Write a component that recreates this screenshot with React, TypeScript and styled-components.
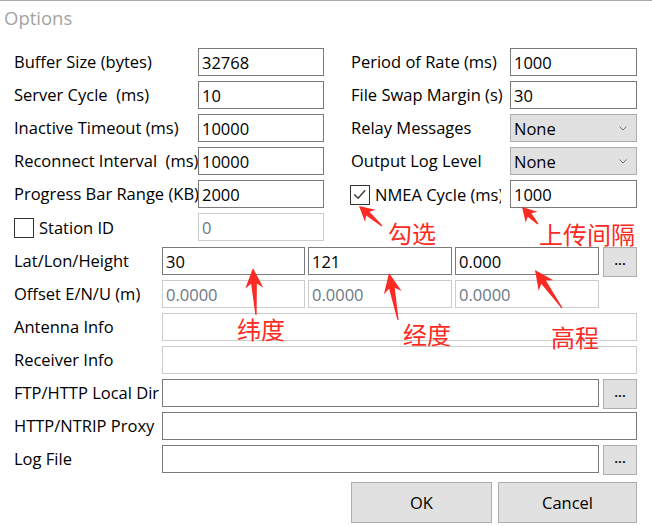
import React from "react";
import styled, { createGlobalStyle } from "styled-components";

const GlobalStyle = createGlobalStyle`
  html, body {
    margin: 0;
    padding: 0;
    background: #ffffff;
  }
  body {
    font-family: "Open Sans", "Noto Sans", "Noto Sans CJK SC", sans-serif;
    color: #000;
  }
`;

const FONT = `"Open Sans", "Noto Sans", "Noto Sans CJK SC", sans-serif`;
const RED = "#fb2a22";

type Pt = [number, number];

const arrowPoints = (tip: Pt, tail: Pt, len: number, half: number) => {
  const dx = tail[0] - tip[0];
  const dy = tail[1] - tip[1];
  const d = Math.hypot(dx, dy);
  const ux = dx / d;
  const uy = dy / d;
  const nx = -uy;
  const ny = ux;
  const at = (a: number, b: number): Pt => [
    tip[0] + ux * a + nx * b,
    tip[1] + uy * a + ny * b,
  ];
  const shaft = half * 0.32;
  const pts: Pt[] = [
    tip,
    at(len, half),
    at(len * 0.78, shaft),
    at(d, 0.6),
    at(d, -0.6),
    at(len * 0.78, -shaft),
    at(len, -half),
  ];
  return pts.map((p) => p.join(",")).join(" ");
};

const ARROWS: { tip: Pt; tail: Pt; len: number; half: number }[] = [
  { tip: [359, 206], tail: [382, 226], len: 15, half: 8 },
  { tip: [522, 207], tail: [538, 224], len: 14, half: 8 },
  { tip: [253, 268], tail: [256, 315], len: 20, half: 9 },
  { tip: [389, 273], tail: [398, 320], len: 20, half: 9 },
  { tip: [535, 270], tail: [562, 308], len: 19, half: 9 },
];

const NOTES = [
  { text: "勾选", x: 388, y: 218 },
  { text: "上传间隔", x: 539, y: 219 },
  { text: "纬度", x: 237, y: 314 },
  { text: "经度", x: 403, y: 319 },
  { text: "高程", x: 551, y: 322 },
];

export default function App() {
  return (
    <>
      <GlobalStyle />
      <Dialog>
        <TopEdge />
        <Title>Options</Title>
        <TopSection>
          <FieldGrid $labelWidth={184} $inputWidth={126}>
            <Label>Buffer Size (bytes)</Label>
            <TextBox>32768</TextBox>
            <Label>Server Cycle  (ms)</Label>
            <TextBox>10</TextBox>
            <Label>Inactive Timeout (ms)</Label>
            <TextBox>10000</TextBox>
            <Label>Reconnect Interval  (ms)</Label>
            <TextBox>10000</TextBox>
            <Label>Progress Bar Range (KB)</Label>
            <TextBox>2000</TextBox>
            <CheckField>
              <CheckBox />
              <span>Station ID</span>
            </CheckField>
            <TextBox $disabled>0</TextBox>
          </FieldGrid>
          <FieldGrid $labelWidth={159} $inputWidth={127}>
            <Label>Period of Rate (ms)</Label>
            <TextBox>1000</TextBox>
            <Label>File Swap Margin (s)</Label>
            <TextBox>30</TextBox>
            <Label>Relay Messages</Label>
            <Combo>
              None
              <Chevron />
            </Combo>
            <Label>Output Log Level</Label>
            <Combo>
              None
              <Chevron />
            </Combo>
            <CheckField $shift={-1} $width={151}>
              <CheckBox>
                <svg width="19" height="19" viewBox="0 0 19 19">
                  <polyline
                    points="3.5,9.5 7.5,13.5 15,5"
                    fill="none"
                    stroke="#3a3a3a"
                    strokeWidth="1.5"
                  />
                </svg>
              </CheckBox>
              <span>NMEA Cycle (ms)</span>
            </CheckField>
            <TextBox>1000</TextBox>
          </FieldGrid>
        </TopSection>

        <BottomGrid>
          <Label>Lat/Lon/Height</Label>
          <TextBox>30</TextBox>
          <TextBox>121</TextBox>
          <TextBox>0.000</TextBox>
          <DotsButton>...</DotsButton>

          <Label>Offset E/N/U (m)</Label>
          <TextBox $disabled>0.0000</TextBox>
          <TextBox $disabled>0.0000</TextBox>
          <TextBox $disabled>0.0000</TextBox>
          <span />

          <Label>Antenna Info</Label>
          <TextBox $disabled $span={4} />

          <Label>Receiver Info</Label>
          <TextBox $disabled $span={4} />

          <Label>FTP/HTTP Local Dir</Label>
          <TextBox $span={3} />
          <DotsButton>...</DotsButton>

          <Label>HTTP/NTRIP Proxy</Label>
          <TextBox $span={4} />

          <Label>Log File</Label>
          <TextBox $span={3} />
          <DotsButton>...</DotsButton>
        </BottomGrid>

        <ButtonRow>
          <DialogButton $width={141}>OK</DialogButton>
          <DialogButton $width={139}>Cancel</DialogButton>
        </ButtonRow>

        <Overlay width="652" height="526" viewBox="0 0 652 526">
          {ARROWS.map((a, i) => (
            <polygon
              key={i}
              points={arrowPoints(a.tip, a.tail, a.len, a.half)}
              fill={RED}
            />
          ))}
        </Overlay>
        {NOTES.map((n) => (
          <Note key={n.text} style={{ left: n.x, top: n.y }}>
            {n.text}
          </Note>
        ))}
      </Dialog>
    </>
  );
}

const Dialog = styled.div`
  position: relative;
  width: 652px;
  height: 526px;
  box-sizing: border-box;
  padding: 0 15px 0 14px;
  overflow: hidden;
  font-family: ${FONT};
  font-size: 16.5px;
`;

const TopEdge = styled.div`
  height: 1px;
  margin: 0 -15px 0 -14px;
  background: #a6a6a6;
`;

const Title = styled.div`
  height: 47px;
  margin-left: -10px;
  padding-top: 4px;
  box-sizing: border-box;
  font-size: 18.5px;
  color: #a3a3a3;
  line-height: 26px;
`;

const TopSection = styled.div`
  display: flex;
  gap: 27px;
`;

const FieldGrid = styled.div<{ $labelWidth: number; $inputWidth: number }>`
  display: grid;
  grid-template-columns: ${(p) => p.$labelWidth}px ${(p) => p.$inputWidth}px;
  grid-auto-rows: 28px;
  row-gap: 5px;
`;

const Label = styled.div`
  display: flex;
  align-items: center;
  white-space: pre;
  overflow: hidden;
  line-height: 1;
  padding-top: 1px;
`;

const TextBox = styled.div<{ $disabled?: boolean; $span?: number }>`
  box-sizing: border-box;
  height: 28px;
  display: flex;
  align-items: center;
  padding: 1px 3px 0;
  border: 1px solid ${(p) => (p.$disabled ? "#cccccc" : "#7a7a7a")};
  background: #fff;
  color: ${(p) => (p.$disabled ? "#6d7886" : "#000")};
  white-space: nowrap;
  overflow: hidden;
  grid-column: span ${(p) => p.$span ?? 1};
  margin-right: ${(p) => (p.$span === 4 ? "-1px" : "0")};
`;

const Combo = styled.div`
  box-sizing: border-box;
  height: 28px;
  display: flex;
  align-items: center;
  justify-content: space-between;
  padding: 1px 9px 0 3px;
  border: 1px solid #adadad;
  background: #e1e1e1;
`;

const Chevron = () => (
  <svg width="8" height="5" viewBox="0 0 8 5">
    <polyline points="0.5,0.5 4,4 7.5,0.5" fill="none" stroke="#707070" strokeWidth="1" />
  </svg>
);

const CheckField = styled.div<{ $shift?: number; $width?: number }>`
  display: flex;
  align-items: center;
  gap: 5px;
  margin-left: ${(p) => p.$shift ?? 0}px;
  width: ${(p) => (p.$width ? `${p.$width}px` : "auto")};
  overflow: hidden;
  white-space: nowrap;
  padding-top: 1px;
`;

const CheckBox = styled.div`
  box-sizing: border-box;
  flex: none;
  width: 20px;
  height: 20px;
  border: 1.5px solid #333333;
  background: #fff;
  display: flex;
  align-items: center;
  justify-content: center;
  svg {
    display: block;
  }
`;

const BottomGrid = styled.div`
  display: grid;
  grid-template-columns: 145px 143px 144px 144px 34px;
  column-gap: 3px;
  grid-auto-rows: 28px;
  row-gap: 5px;
  margin-top: 6px;
`;

const DotsButton = styled.div`
  box-sizing: border-box;
  height: 30px;
  width: 34px;
  margin-left: 1px;
  display: flex;
  align-items: center;
  justify-content: center;
  padding-bottom: 5px;
  border: 1px solid #adadad;
  background: #e1e1e1;
  font-size: 14px;
  font-weight: 600;
`;

const ButtonRow = styled.div`
  display: flex;
  justify-content: flex-end;
  gap: 6px;
  margin-top: 9px;
`;

const DialogButton = styled.div<{ $width: number }>`
  box-sizing: border-box;
  width: ${(p) => p.$width}px;
  height: 41px;
  display: flex;
  align-items: center;
  justify-content: center;
  border: 1px solid #adadad;
  background: #e1e1e1;
  padding-bottom: 1px;
`;

const Overlay = styled.svg`
  position: absolute;
  left: 0;
  top: 0;
  pointer-events: none;
`;

const Note = styled.span`
  position: absolute;
  font-family: "Noto Sans CJK SC", sans-serif;
  font-size: 24px;
  line-height: 30px;
  color: ${RED};
  white-space: nowrap;
`;
